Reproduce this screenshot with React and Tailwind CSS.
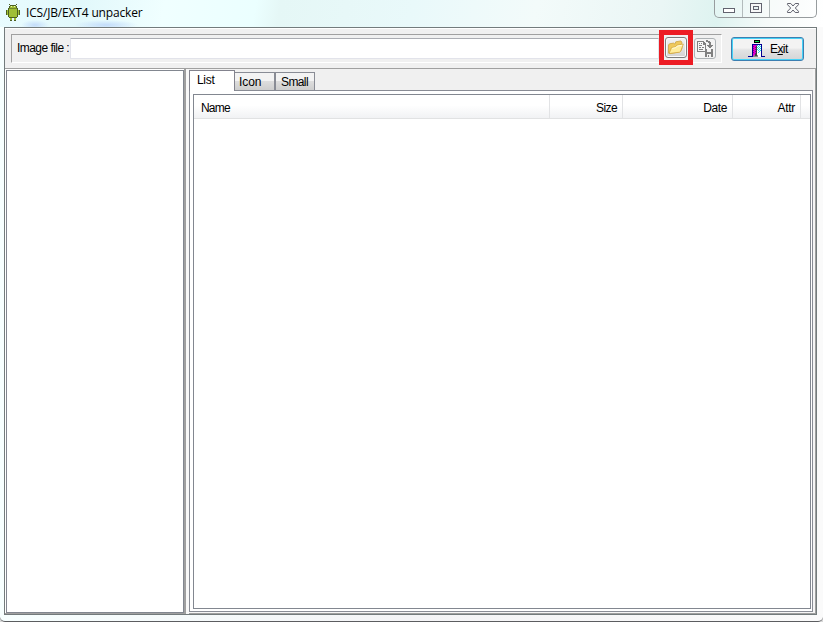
const uiText = "font-['Liberation_Sans'] text-[12px] leading-[14px] tracking-[-0.3px]";

function Android() {
  return (
    <svg width="14" height="17" viewBox="0 0 14 17" shapeRendering="crispEdges">
      <path d="M4 1h6v1H4zM3 2h8v2H3zM0 6h14v5H0zM2 4h10v9H2zM4 13h2v3H4zM8 13h2v3H8z" fill="#a0bf35" />
      <path d="M3 0h1v1H3zM10 0h1v1h-1zM4 1h6v1H4zM3 2h1v2H3zM10 2h1v2h-1zM0 6h1v5H0zM13 6h1v5h-1zM2 4h1v9H2zM11 4h1v9h-1zM3 13h8v1H3zM4 16h2v1H4zM8 16h2v1H8z" fill="#4d6120" />
      <path d="M3 4h8v1H3z" fill="#71892c" />
      <path d="M5 2h1v1H5zM8 2h1v1H8z" fill="#e8f4bd" />
    </svg>
  );
}

function Folder() {
  return (
    <svg className="shrink-0" width="18" height="17" viewBox="0 0 18 17">
      <path d="M1.5 14V6l1-1.2 4-.7 1.3 1 1-2.3 5-.9 1 1.2v6.5l-1.6 3-9.5 2z" fill="#efc95c" stroke="#cda545" strokeWidth=".8" />
      <path d="M2 14.6 4.5 8.6l4-.8 1.3-1.6 6.5-1.1-2.5 7-1.3 1.1z" fill="#ffec9b" stroke="#d2a63e" strokeWidth=".8" />
      <path d="m5.2 9.4 3.8-.8 1.2-1.5 5-.9" fill="none" stroke="#fffbe0" />
    </svg>
  );
}

function SavePages() {
  return (
    <svg className="shrink-0" width="18" height="17" viewBox="0 0 18 17" shapeRendering="crispEdges">
      <path d="M1 1h7v1h1v1h1v9H1z" fill="#808080" />
      <path d="M2 2h5v3h2v6H2z" fill="#f7f7f7" />
      <path d="M3 3h1v1H3zM5 3h1v1H5zM3 5h3v1H3zM3 7h2v1H3zM6 7h2v1H6zM3 9h4v1H3z" fill="#808080" />
      <path d="M10 0h2v1h2v1h1v3h2v1h-1v1h-1v1h-2V7h-1V6h-1V5h2V3h-1V2h-2z" fill="#808080" />
      <path d="M9 9h8v8H9z" fill="#808080" />
      <path d="M11 9h4v3h-4zM11 14h4v3h-4z" fill="#f2f2f2" />
      <path d="M12 15h1v2h-1z" fill="#808080" />
    </svg>
  );
}

function Door() {
  return (
    <svg width="18" height="18" viewBox="0 0 18 18" shapeRendering="crispEdges">
      <path d="M6 0h6v3H6z" fill="#000" />
      <path d="M7 1h4v1H7z" fill="#00e050" />
      <path d="M5 5h4v11H5z" fill="#e000d0" />
      <path d="M5 6h1v1H5zM7 7h1v1H7zM5 8h1v1H5zM7 9h1v1H7zM5 10h1v1H5zM7 11h1v1H7zM5 12h1v1H5zM7 13h1v1H7z" fill="#8a0080" />
      <path d="M9 5h4v12H9z" fill="#fff" />
      <path d="M9 5h1v1H9zM11 5h1v1h-1zM10 6h1v1h-1zM12 6h1v1h-1zM9 7h1v1H9zM11 7h1v1h-1zM10 8h1v1h-1zM12 8h1v1h-1zM9 9h1v1H9zM11 9h1v1h-1zM10 10h1v1h-1zM12 10h1v1h-1zM11 11h1v1h-1zM10 12h1v1h-1z" fill="#22dce4" />
      <path d="M5 16l3-2 2 2v1H5z" fill="#888" />
      <path d="M8 6h1v8H8zM7 14h2v2H7z" fill="#404040" />
      <path d="M0 16h4V4h10v12h3v1h-4V5H5v12H0z" fill="#000090" />
    </svg>
  );
}

function TitleBar() {
  return (
    <header className="flex h-[27px] shrink-0 items-start bg-[radial-gradient(ellipse_14px_5px_at_35px_25px,#c3dcfa,transparent),radial-gradient(ellipse_32px_5px_at_106px_25px,#c3dcfa,transparent),linear-gradient(100deg,#e9fcff_0%,#e2f8fb_10%,#f0ffff_20%,#ebffff_31%,#e5f7f6_34%,#e9f9fa_50%,#f3fbfa_65%,#eaf6f5_80%,#def3f0_87%,#f5faf9_93%,#ffffff_100%)]">
      <div className="mt-[4px] ml-[6px]"><Android /></div>
      <div className="mt-[5px] ml-[6px] font-['Open_Sans'] text-[12px] leading-[16px] tracking-[-0.17px] whitespace-nowrap text-black">ICS/JB/EXT4 unpacker</div>
      <div className="mr-[6px] ml-auto flex h-[18px] w-[103px] rounded-b-[5px] border border-t-0 border-[#979c9e] bg-white/20">
        <div className="w-[28px] border-r border-[#b3bbbc]">
          <svg width="27" height="17" shapeRendering="crispEdges"><rect x="8.5" y="8.5" width="11" height="4" fill="#fff" stroke="#62636f" /></svg>
        </div>
        <div className="w-[27px] border-r border-[#b3bbbc]">
          <svg width="26" height="17" shapeRendering="crispEdges">
            <rect x="7.5" y="3.5" width="11" height="9" fill="#f7f8f8" stroke="#62636f" />
            <rect x="10.5" y="6.5" width="5" height="3" fill="#e7f2f2" stroke="#62636f" />
          </svg>
        </div>
        <div className="w-[46px]">
          <svg width="46" height="17">
            <path d="M17.5 3.5h3.3l2.2 2.5 2.2-2.5h3.3v1.2L25.3 8l3.2 3.3v1.2h-3.3L23 10l-2.2 2.5h-3.3v-1.2L20.7 8l-3.2-3.3z" fill="#f8fafa" stroke="#62636f" />
          </svg>
        </div>
      </div>
    </header>
  );
}

function Toolbar() {
  return (
    <div className={`flex h-[40px] shrink-0 items-start border-t border-white bg-[#f0f0f0] ${uiText}`}>
      <div className="mt-[5px] ml-[6px] flex h-[29px] w-[711px] border border-t-[#a0a0a0] border-r-white border-b-white border-l-[#a0a0a0]">
        <label className="mt-[6px] ml-[5px] w-[53px] shrink-0 tracking-[-0.55px] whitespace-nowrap">Image file :</label>
        <input className="mt-[3px] h-[21px] w-[589px] shrink-0 rounded-[1px] border border-[#e2e3ea] border-t-[#abadb3] bg-white outline-none" aria-label="Image file" />
        <div className="-mt-[5px] flex h-[35px] w-[34px] shrink-0 items-center justify-center border-[5px] border-[#ed1c24] bg-[#f0f0f0]">
          <button className="flex h-[21px] w-[22px] items-center justify-center rounded-[3px] border border-[#7c7c7c] bg-linear-to-b from-[#f5f5f5] to-[#d3d3d3] shadow-[inset_0_0_0_1px_#fafafa]" aria-label="Open"><Folder /></button>
        </div>
        <button className="mt-[3px] ml-px flex h-[21px] w-[22px] shrink-0 items-center justify-center rounded-[3px] border border-[#adb2b5] bg-[#f4f4f4]" aria-label="Save"><SavePages /></button>
      </div>
      <button className="mt-[8px] ml-[9px] flex h-[24px] w-[73px] items-start rounded-[3px] border border-[#3c7fb1] bg-linear-to-b from-[#f3f3f3] from-45% via-[#e2e3e4] via-55% to-[#d3d5d6] shadow-[inset_0_0_0_1px_#45d2f7]">
        <span className="mt-[2px] ml-[16px]"><Door /></span>
        <span className="mt-[4px] ml-[4px] tracking-[-0.6px]">E<u>x</u>it</span>
      </button>
    </div>
  );
}

function Tabs() {
  return (
    <div className={`flex h-[21px] shrink-0 items-end bg-[#f0f0f0] ${uiText}`}>
      <div className="z-10 -mb-px h-[21px] w-[46px] border border-b-0 border-[#83838e] bg-white pt-[2px] pl-[7px]">List</div>
      <div className="h-[18px] w-[40px] border border-b-0 border-l-0 border-[#898c95] bg-linear-to-b from-[#f3f3f3] from-45% via-[#dddddd] via-50% to-[#cecece] pt-[2px] pl-[4px] tracking-[-0.1px]">Icon</div>
      <div className="h-[18px] w-[40px] border border-b-0 border-[#898c95] bg-linear-to-b from-[#f3f3f3] from-45% via-[#dddddd] via-50% to-[#cecece] pt-[2px] pl-[5px] tracking-[-0.6px]">Small</div>
    </div>
  );
}

function FileList() {
  return (
    <div className="flex min-h-0 flex-1 flex-col border border-[#828790] bg-white">
      <div className="flex h-[24px] shrink-0 border-b border-[#e1e2e3] bg-linear-to-b from-white from-45% to-[#f1f2f4] font-['Liberation_Sans'] text-[12px] leading-[26px] tracking-[-0.4px]">
        <div className="w-[356px] border-r border-[#e2e3e5] pl-[7px] tracking-[-0.9px]"><span className="tracking-[-0.8px]">Name</span></div>
        <div className="w-[73px] border-r border-[#e2e3e5] pr-[5px] text-right tracking-[-0.6px]">Size</div>
        <div className="w-[110px] border-r border-[#e2e3e5] pr-[5px] text-right">Date</div>
        <div className="w-[68px] border-r border-[#e2e3e5] pr-[5px] text-right tracking-[-0.3px]">Attr</div>
      </div>
    </div>
  );
}

export default function App() {
  return (
    <div className="h-[622px] w-[823px] overflow-hidden bg-[#d8d8d8] text-black">
      <div className="flex h-[622px] flex-col overflow-hidden rounded-b-[5px] border-b border-[#5c5d60] bg-linear-to-r from-[#f7ffff] via-[#f4f4f6] to-[#fafafa]">
        <TitleBar />
        <main className="mr-[6px] ml-[4px] flex h-[588px] shrink-0 flex-col border border-[#737b7c] bg-[#f0f0f0]">
          <Toolbar />
          <div className="flex min-h-0 flex-1 border-t border-[#a0a0a0] bg-[#f0f0f0]">
            <aside className="w-[180px] border-r border-b border-[#a0a0a0] bg-white pt-px pl-px">
              <div className="h-full w-full border border-[#828790] bg-white" />
            </aside>
            <div className="w-[4px] border-l border-[#a0a0a0] bg-[#f8f8f8]" />
            <section className="flex flex-1 flex-col border-r border-b border-[#a0a0a0] bg-[#f5f5f5] pr-[2px] pb-px">
              <Tabs />
              <div className="flex min-h-0 flex-1 flex-col border border-[#898c95] bg-white p-[3px] pr-px pb-[2px]">
                <FileList />
              </div>
            </section>
          </div>
        </main>
      </div>
    </div>
  );
}
